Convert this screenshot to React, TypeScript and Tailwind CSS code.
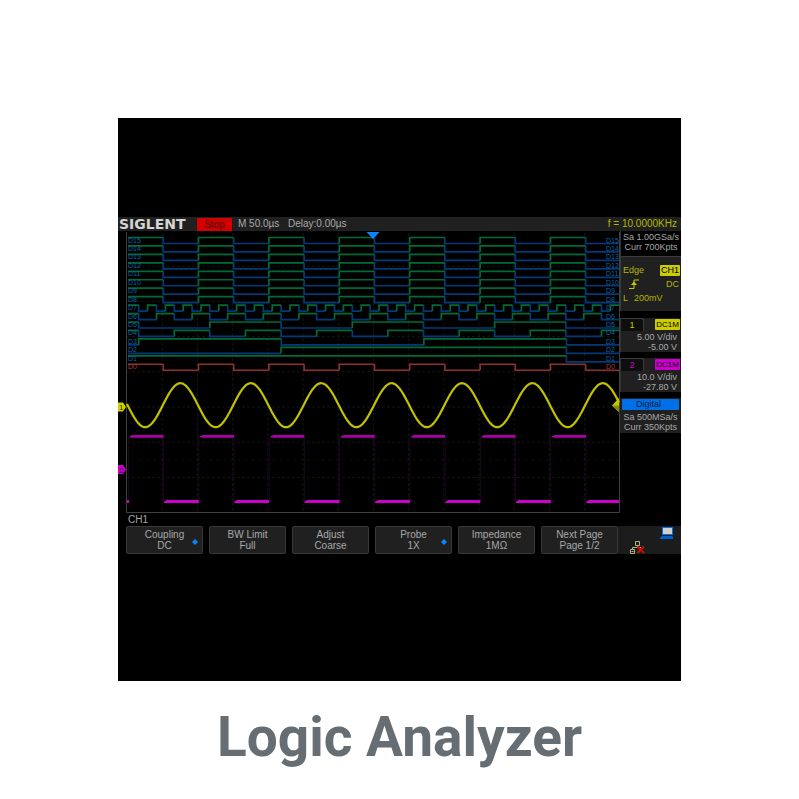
import React from "react";

interface Channel {
  id: string;
  // first edge, distance between edges, level before the first edge
  first: number;
  step: number;
  high: boolean;
}

interface MenuItem {
  id: string;
  label: string;
  value: string;
  knob: boolean;
}

const START = 10;
const END = 501;

const busChannels: Channel[] = [15, 14, 13, 12, 11, 10, 9, 8].map((n) => ({
  id: "D" + n,
  first: 45.3,
  step: 35.2,
  high: true,
}));

const channels: Channel[] = [
  ...busChannels,
  { id: "D7", first: 20.7, step: 8.9, high: true },
  { id: "D6", first: 20.7, step: 17.8, high: true },
  { id: "D5", first: 20.7, step: 71.2, high: true },
  { id: "D4", first: 20.7, step: 35.6, high: true },
  { id: "D3", first: 20.7, step: 142.6, high: false },
  { id: "D2", first: 163, step: 285.4, high: false },
  { id: "D1", first: 448.4, step: 400, high: true },
  { id: "D0", first: 45.3, step: 35.2, high: true },
];

const menu: MenuItem[] = [
  { id: "1", label: "Coupling", value: "DC", knob: true },
  { id: "2", label: "BW Limit", value: "Full", knob: false },
  { id: "3", label: "Adjust", value: "Coarse", knob: false },
  { id: "4", label: "Probe", value: "1X", knob: true },
  { id: "5", label: "Impedance", value: "1MΩ", knob: false },
  { id: "6", label: "Next Page", value: "Page 1/2", knob: false },
];

// high and low parts are separate paths, each one starts with its own edge
const digitalPaths = (ch: Channel, top: number) => {
  const low = top + 6;
  let up = "";
  let down = "";
  let x = START;
  let next = ch.first;
  let isHigh = ch.high;
  while (x < END) {
    const to = Math.min(next, END);
    if (isHigh) {
      up += `M${x} ${x === START ? top : low}V${top}H${to}`;
    } else {
      down += `M${x} ${x === START ? low : top}V${low}H${to}`;
    }
    x = to;
    next += ch.step;
    isHigh = !isHigh;
  }
  return { up, down };
};

const sinePath = () => {
  let d = "";
  for (let x = 9; x <= 501; x += 1) {
    const y = 174.2 - 22 * Math.cos(((x - 62.4) / 70.4) * 2 * Math.PI);
    d += `${x === 9 ? "M" : "L"}${x} ${y.toFixed(2)}`;
  }
  return d;
};

const Plot = () => {
  const cols = Array.from({ length: 13 }, (_, i) => 44.3 + i * 35.2);
  const rows = Array.from({ length: 7 }, (_, i) => 35.2 + i * 35.2);
  const edges = Array.from({ length: 13 }, (_, i) => 45.6 + i * 35.2);

  return (
    <svg viewBox="0 0 502 283" className="min-w-0 flex-1 self-start" fontFamily="Liberation Sans, sans-serif">
      <g stroke="#141414" strokeWidth="1" strokeDasharray="3 2">
        {cols.map((x) => (
          <path key={x} d={`M${x} 2V281`} />
        ))}
        {rows.map((y) => (
          <path key={y} d={`M9 ${y}H501`} />
        ))}
      </g>
      <path d="M15.5 229H501" stroke="#202020" strokeDasharray="1 6" />
      <path d="M8.5 1V281.5H501.5V1" fill="none" stroke="#404040" />

      {channels.map((ch, i) => {
        const top = 6.5 + i * 8.45;
        const { up, down } = digitalPaths(ch, top);
        const red = ch.id === "D0";
        const color = red ? "#a83a3a" : "#0a66a0";
        return (
          <g key={ch.id} fill="none" strokeWidth="1.7">
            <path d={down} stroke={red ? "#8f3030" : "#003a7a"} />
            <path d={up} stroke={red ? "#8f3030" : "#006b36"} />
            <text x="10" y={top + 5} fontSize="7" fill={color}>
              {ch.id}
            </text>
            <text x="488" y={top + 5} fontSize="7" fill={color}>
              {ch.id}
            </text>
          </g>
        );
      })}

      <path d={sinePath()} fill="none" stroke="#c2c200" strokeWidth="2.2" />
      <g stroke="#240024">
        {edges.map((x) => (
          <path key={x} d={`M${x} 206V270`} />
        ))}
        <path d="M10.4 206V270" />
      </g>
      {[-1, ...edges.keys()].map((i) => {
        const x = 45.6 + i * 35.2;
        const to = Math.min(x + 35.2, 501);
        return i % 2 ? (
          <path key={i} d={`M${x + 1} 205.4L${x + 4} 204H${to}V206.700H${x + 2}Z`} fill="#aa00aa" />
        ) : (
          <path key={i} d={`M${x} 271L${x + 3} 269H${to}V272H${x}Z`} fill="#cc00cc" />
        );
      })}
      <path d="M9 269H11V272H9Z" fill="#cc00cc" />

      <path d="M248.5 1H261.5L255 8Z" fill="#0a84ff" />
      <path d="M494 174.5L501 167V181Z" fill="#c8c800" />
      <path d="M494 174.5H501V181Z" fill="#8a8a00" />
      <path d="M0 171.5H5L8 176L5 180.5H0Z" fill="#d2d200" />
      <text x="1" y="179" fontSize="8" fill="#303000">
        1
      </text>
      <path d="M0 234H5L8 238.5L5 243H0Z" fill="#c800c8" />
      <text x="1" y="242" fontSize="8" fill="#300030">
        2
      </text>
    </svg>
  );
};

interface AnalogProps {
  number: string;
  scale: string;
  offset: string;
  tone: string;
  badge: string;
}

const AnalogBox = ({ number, scale, offset, tone, badge }: AnalogProps) => {
  return (
    <div className="h-[34px] border-l border-[#333] bg-[#202020]">
      <div className="flex h-[14px] items-start justify-between">
        <div className={`h-[13px] w-[23px] rounded-tr-[3px] border-t border-r border-[#3c3c3c] bg-[#0e0e0e] text-center leading-[13px] ${tone}`}>
          {number}
        </div>
        <div className={`mt-[1px] mr-[1px] h-[11px] w-[25px] rounded-[1px] text-center text-[8px] leading-[11px] text-black ${badge}`}>
          DC1M
        </div>
      </div>
      <div className="pr-1 text-right leading-[10px]">
        <div>{scale}</div>
        <div>{offset}</div>
      </div>
    </div>
  );
};

const Sidebar = () => {
  return (
    <div className="flex w-[61px] shrink-0 flex-col text-[9px] whitespace-nowrap text-[#a8a8a8]">
      <div className="h-[25px] border-l border-[#333] pt-[1px] text-center leading-[10px]">
        <div>Sa 1.00GSa/s</div>
        <div>Curr 700Kpts</div>
      </div>
      <div className="mb-[7px] flex h-[55px] flex-col justify-center border-t border-l border-[#3c3c3c] bg-[#202020] pr-[1px] pl-[2px] leading-[14px] text-[#b4b400]">
        <div className="flex items-center justify-between">
          <span>Edge</span>
          <span className="h-[11px] w-[20px] rounded-[1px] bg-[#cccc00] text-center leading-[11px] text-black">
            CH1
          </span>
        </div>
        <div className="flex items-center justify-between pl-[6px]">
          <svg viewBox="0 0 11 10" className="h-[10px] w-[11px]" fill="none" stroke="#c8c800">
            <path d="M0 9.5H5V1H10" />
            <path d="M2 6L5 2.5L8 6Z" fill="#c8c800" stroke="none" />
          </svg>
          <span className="pr-[1px]">DC</span>
        </div>
        <div className="flex gap-[6px]">
          <span>L</span>
          <span>200mV</span>
        </div>
      </div>
      <AnalogBox number="1" scale="5.00 V/div" offset="-5.00 V" tone="text-[#c8c800]" badge="bg-[#cccc00]" />
      <div className="h-[6px]" />
      <AnalogBox number="2" scale="10.0 V/div" offset="-27.80 V" tone="text-[#c800c8]" badge="bg-[#cc00cc]" />
      <div className="mt-[6px] h-[35px] bg-[#202020] pt-[1px] text-center leading-[10px]">
        <button className="mx-auto mb-[2px] block h-[11px] w-[57px] rounded-[1px] bg-[#0070e8] pr-1 leading-[11px] text-[#001c40]">
          Digital
        </button>
        <div>Sa 500MSa/s</div>
        <div>Curr 350Kpts</div>
      </div>
    </div>
  );
};

const Tray = () => {
  return (
    <div className="flex h-[28px] w-[63px] shrink-0 justify-between bg-[#1c1c1c] pr-[7px] pl-[12px]">
      <svg viewBox="0 0 15 13" className="h-[13px] w-[15px] self-end" fill="none" stroke="#b0b080">
        <path d="M5.5 0.5H9.5V4.500H5.5ZM7.5 4.5V6.5M2.5 8V6.5H11" />
        <path d="M0.5 8.5H4.5V12.5H0.5ZM1.500 10.5H3.5" />
        <path d="M7.5 5.5L14 12M14 5.5L7.5 12" stroke="#c81000" strokeWidth="2" />
      </svg>
      <svg viewBox="0 0 14 12" className="mt-[1px] h-[12px] w-[14px]">
        <path d="M2 0H13V8H2Z" fill="#0070e8" />
        <path d="M3 1H12V7H3Z" fill="#d0d0d0" />
        <path d="M2 9H12L13 10V12H0V10.5Z" fill="#0060c8" />
      </svg>
    </div>
  );
};

const Scope = () => {
  return (
    <div className="font-['Liberation_Sans',sans-serif] text-[10px] text-[#a8a8a8]">
      <div className="flex h-[14px] items-center bg-[#202020] leading-[14px] whitespace-nowrap">
        <div className="w-[79px] pl-[1px] font-['DejaVu_Sans',sans-serif] text-[14px] font-bold text-[#d4d4d4]">
          SIGLENT
        </div>
        <div className="h-[13px] w-[35px] bg-[#d40000] text-center leading-[13px] text-[#480000]">Stop</div>
        <div className="ml-[6px] w-[50px]">M 50.0µs</div>
        <div>Delay:0.00µs</div>
        <div className="ml-auto pr-1 text-[#b4b400]">f = 10.0000KHz</div>
      </div>
      <div className="flex">
        <Plot />
        <Sidebar />
      </div>
      <div className="h-[12px] pl-[10px] leading-[12px]">CH1</div>
      <div className="flex">
        <div className="flex flex-1 gap-[6px] pl-[8px]">
          {menu.map((item) => (
            <button
              key={item.id}
              className="relative h-[28px] min-w-0 flex-1 rounded-[2px] border border-[#383838] bg-[#202020] text-center leading-[11px] whitespace-nowrap"
            >
              <span className="block">{item.label}</span>
              <span className="block">{item.value}</span>
              {item.knob && (
                <svg viewBox="0 0 6 6" className="absolute right-[4px] bottom-[8px] h-[6px] w-[6px]">
                  <path d="M3 0L6 3L3 6L0 3Z" fill="#0a84ff" />
                </svg>
              )}
            </button>
          ))}
        </div>
        <Tray />
      </div>
    </div>
  );
};

const App = () => {
  return (
    <div className="flex min-h-screen flex-col items-center bg-white pt-[118px]">
      <div className="aspect-square w-full max-w-[563px] bg-black pt-[99px]">
        <Scope />
      </div>
      <h1 className="mt-6 text-center font-['Roboto',sans-serif] text-[55px] leading-[64px] font-bold text-[#666e73]">
        Logic Analyzer
      </h1>
    </div>
  );
};

export default App;
